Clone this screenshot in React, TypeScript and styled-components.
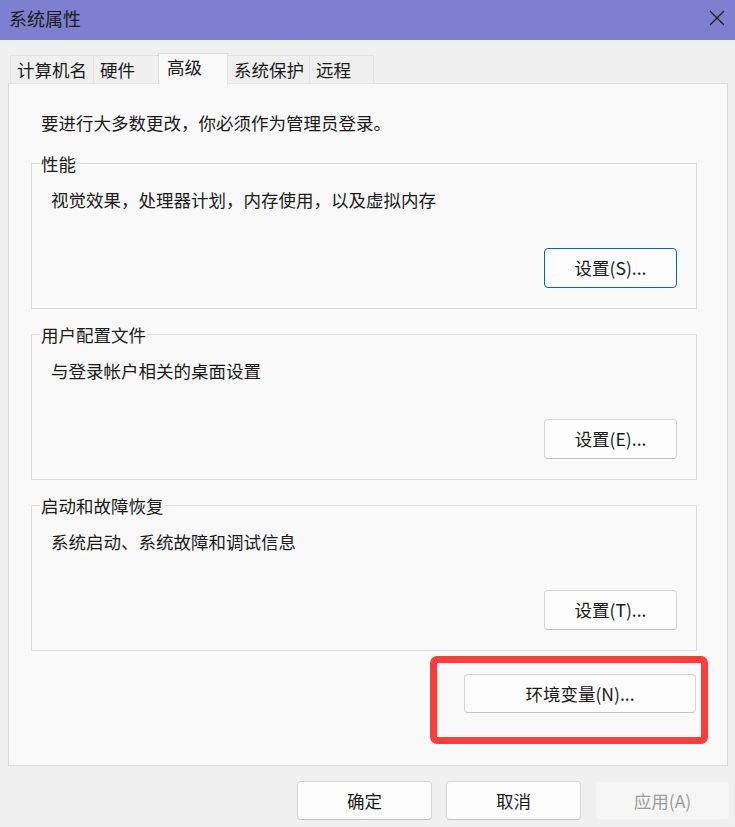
import styled, { createGlobalStyle } from "styled-components";

const Global = createGlobalStyle`
  html, body {
    margin: 0;
    padding: 0;
    background: #f0f0f0;
  }
  body {
    font-family: "Noto Sans CJK SC", "Microsoft YaHei", sans-serif;
    color: #1a1a1a;
    font-size: 17.5px;
  }
`;

const Window = styled.div`
  width: 735px;
  height: 827px;
  background: #f0f0f0;
  display: flex;
  flex-direction: column;
  overflow: hidden;
`;

const TitleBar = styled.div`
  height: 40px;
  flex: none;
  background: #7e7fd0;
  display: flex;
  align-items: center;
  justify-content: space-between;
  padding: 0 10px 0 9px;
  box-sizing: border-box;
`;

const Title = styled.span`
  font-size: 18px;
  line-height: 24px;
  margin-top: -4px;
  color: #1a1a1a;
`;

const Close = styled.button`
  border: none;
  background: transparent;
  padding: 0;
  width: 16px;
  height: 16px;
  margin-top: -4px;
  display: flex;
`;

const TabStrip = styled.div`
  display: flex;
  align-items: flex-end;
  margin-top: 12px;
  padding-left: 10px;
  height: 32px;
  position: relative;
  z-index: 1;
`;

const Tab = styled.div<{ $w: number; $active?: boolean }>`
  box-sizing: border-box;
  width: ${(p) => p.$w}px;
  height: ${(p) => (p.$active ? 32 : 29)}px;
  margin-bottom: ${(p) => (p.$active ? -1 : 0)}px;
  padding: 0 ${(p) => (p.$active ? 8 : 6)}px;
  border: 1px solid ${(p) => (p.$active ? "#dcdcdc" : "#e4e4e4")};
  border-bottom: ${(p) => (p.$active ? "none" : "1px solid #e4e4e4")};
  background: ${(p) => (p.$active ? "#f9f9f9" : "#f0f0f0")};
  display: flex;
  align-items: ${(p) => (p.$active ? "flex-start" : "center")};
  padding-top: ${(p) => (p.$active ? 1 : 0)}px;
  line-height: 24px;
  white-space: nowrap;
  & + & {
    margin-left: -1px;
  }
`;

const Panel = styled.div`
  box-sizing: border-box;
  height: 683px;
  margin: -1px 7px 0 8px;
  border: 1px solid #dcdcdc;
  background: #f9f9f9;
  padding: 27px 30px 0 22px;
  display: flex;
  flex-direction: column;
`;

const Intro = styled.p`
  margin: 0 0 28px 10px;
  line-height: 24px;
`;

const Group = styled.div`
  position: relative;
  box-sizing: border-box;
  height: 146px;
  border: 1px solid #dcdcdc;
  padding: 24px 19px 20px 19px;
  display: flex;
  flex-direction: column;
  justify-content: space-between;
  & + & {
    margin-top: 25px;
  }
`;

const Legend = styled.span`
  position: absolute;
  top: -12px;
  left: 8px;
  padding: 0 1px;
  background: #f9f9f9;
  line-height: 24px;
`;

const Desc = styled.div`
  line-height: 24px;
`;

const Button = styled.button<{ $w: number; $h?: number; $focus?: boolean; $disabled?: boolean }>`
  box-sizing: border-box;
  width: ${(p) => p.$w}px;
  height: ${(p) => p.$h ?? 40}px;
  border-radius: 4px;
  border: 1px solid ${(p) => (p.$focus ? "#0067c0" : p.$disabled ? "#f0f0f0" : "#d4d4d4")};
  border-bottom-color: ${(p) => (p.$focus ? "#0067c0" : p.$disabled ? "#f0f0f0" : "#c2c2c2")};
  background: ${(p) => (p.$disabled ? "#f6f6f6" : "#fdfdfd")};
  color: ${(p) => (p.$disabled ? "#9d9d9d" : "#1a1a1a")};
  font-family: inherit;
  font-size: 17.5px;
  line-height: 24px;
  padding: 0;
  align-self: flex-end;
  flex: none;
`;

const Highlight = styled.div`
  align-self: flex-end;
  margin: 5px -11px 0 0;
  border: 7px solid #ff3b3b;
  border-radius: 7px;
  padding: 11px 5px 24px 27px;
  display: flex;
`;

const Footer = styled.div`
  display: flex;
  justify-content: flex-end;
  gap: 14px;
  margin-top: 15px;
  padding-right: 5px;
`;

function CloseIcon() {
  return (
    <svg width="16" height="16" viewBox="0 0 16 16">
      <path d="M1 1 L15 15 M15 1 L1 15" stroke="#1a1a1a" strokeWidth="1.3" fill="none" />
    </svg>
  );
}

const groups = [
  { title: "性能", desc: "视觉效果，处理器计划，内存使用，以及虚拟内存", btn: "设置(S)...", focus: true },
  { title: "用户配置文件", desc: "与登录帐户相关的桌面设置", btn: "设置(E)..." },
  { title: "启动和故障恢复", desc: "系统启动、系统故障和调试信息", btn: "设置(T)..." },
];

const tabs = [
  { label: "计算机名", w: 84 },
  { label: "硬件", w: 66 },
  { label: "高级", w: 70, active: true },
  { label: "系统保护", w: 83 },
  { label: "远程", w: 65 },
];

export default function App() {
  return (
    <>
      <Global />
      <Window>
        <TitleBar>
          <Title>系统属性</Title>
          <Close aria-label="关闭">
            <CloseIcon />
          </Close>
        </TitleBar>
        <TabStrip>
          {tabs.map((t) => (
            <Tab key={t.label} $w={t.w} $active={t.active}>
              {t.label}
            </Tab>
          ))}
        </TabStrip>
        <Panel>
          <Intro>要进行大多数更改，你必须作为管理员登录。</Intro>
          {groups.map((g) => (
            <Group key={g.title}>
              <Legend>{g.title}</Legend>
              <Desc>{g.desc}</Desc>
              <Button $w={133} $focus={g.focus}>
                {g.btn}
              </Button>
            </Group>
          ))}
          <Highlight>
            <Button $w={232} $h={39}>
              环境变量(N)...
            </Button>
          </Highlight>
        </Panel>
        <Footer>
          <Button $w={135} $h={39}>确定</Button>
          <Button $w={135} $h={39}>取消</Button>
          <Button $w={135} $h={39} $disabled>
            应用(A)
          </Button>
        </Footer>
      </Window>
    </>
  );
}
